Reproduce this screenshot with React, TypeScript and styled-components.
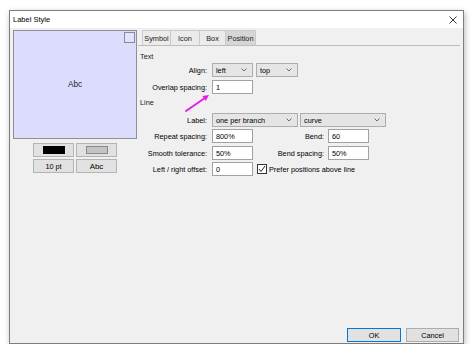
import React from 'react';
import styled, { createGlobalStyle } from 'styled-components';

const GlobalStyle = createGlobalStyle`
  body {
    margin: 0;
    background: #ffffff;
    font-family: "Liberation Sans", Arial, sans-serif;
    font-size: 7.3px;
    color: #000;
  }
`;

const Page = styled.div`
  padding: 10px 0 0 9px;
`;

const Dialog = styled.div`
  width: 455px;
  height: 334px;
  box-sizing: border-box;
  border: 1px solid #7d7d7d;
  background: #f0f0f0;
  box-shadow: 1px 2px 6px rgba(0, 0, 0, 0.28);
  display: flex;
  flex-direction: column;
`;

const TitleBar = styled.div`
  height: 17px;
  background: #ffffff;
  display: flex;
  align-items: center;
  justify-content: space-between;
  padding: 0 6px 0 3px;
  font-size: 7.5px;
`;

const Body = styled.div`
  flex: 1;
  display: flex;
  flex-direction: column;
  padding: 2px 3px 1px 3px;
`;

const Main = styled.div`
  flex: 1;
  display: flex;
  gap: 1px;
`;

const LeftCol = styled.div`
  width: 124px;
  display: flex;
  flex-direction: column;
  align-items: center;
`;

const Preview = styled.div`
  position: relative;
  width: 124px;
  height: 109px;
  box-sizing: border-box;
  background: #dcdcfd;
  border: 1px solid #8f8f96;
  display: flex;
  align-items: center;
  justify-content: center;
  font-size: 8.2px;
  color: #1c1c2c;
`;

const CornerBox = styled.div`
  position: absolute;
  top: 1px;
  right: 1px;
  width: 11px;
  height: 11px;
  box-sizing: border-box;
  border: 1px solid #8a8aa6;
  background: #e2e2fb;
`;

const SwatchGrid = styled.div`
  margin-top: 4px;
  display: grid;
  grid-template-columns: 41px 41px;
  gap: 2px;
`;

const SmallButton = styled.div<{ $big?: boolean }>`
  height: 14px;
  box-sizing: border-box;
  border: 1px solid #b4b4b4;
  background: #e1e1e1;
  display: flex;
  align-items: center;
  justify-content: center;
  font-size: ${p => (p.$big ? '7.9px' : '7.3px')};
`;

const Swatch = styled.div<{ $fill: string; $edge: string }>`
  width: 22px;
  height: 8px;
  box-sizing: border-box;
  background: ${p => p.$fill};
  border: 1px solid ${p => p.$edge};
`;

const RightCol = styled.div`
  flex: 1;
  display: flex;
  flex-direction: column;
`;

const TabStrip = styled.div`
  display: flex;
  height: 15px;
  margin-left: 4px;
`;

const Tab = styled.div<{ $w: number; $active?: boolean }>`
  width: ${p => p.$w}px;
  box-sizing: border-box;
  border: 1px solid #cacaca;
  border-bottom: none;
  margin-left: -1px;
  background: ${p => (p.$active ? '#d6d6d6' : '#ebebeb')};
  display: flex;
  align-items: center;
  justify-content: center;
  color: #202020;
  &:first-child {
    margin-left: 0;
  }
`;

const Pane = styled.div`
  position: relative;
  flex: 1;
  border-top: 1px solid #bdbdbd;
  padding: 6px 0 0 2px;
`;

const Heading = styled.div<{ $gap?: number }>`
  height: 10px;
  line-height: 10px;
  margin-top: ${p => p.$gap ?? 0}px;
  color: #202020;
`;

const Row = styled.div<{ $gap: number }>`
  display: flex;
  align-items: center;
  height: 14px;
  margin-top: ${p => p.$gap}px;
`;

const FieldLabel = styled.div`
  width: 67px;
  margin-right: 5px;
  text-align: right;
  white-space: nowrap;
`;

const SideLabel = styled.div`
  width: 71px;
  margin-right: 4px;
  text-align: right;
  white-space: nowrap;
`;

const Select = styled.div<{ $w: number; $after?: number }>`
  position: relative;
  width: ${p => p.$w}px;
  height: 14px;
  box-sizing: border-box;
  margin-right: ${p => p.$after ?? 0}px;
  border: 1px solid #adadad;
  background: #e5e5e5;
  padding-left: 3px;
  display: flex;
  align-items: center;
  svg {
    position: absolute;
    right: 5px;
    top: 4px;
  }
`;

const Field = styled.div`
  width: 41px;
  height: 14px;
  box-sizing: border-box;
  border: 1px solid #a2a2a2;
  background: #ffffff;
  padding-left: 3px;
  display: flex;
  align-items: center;
`;

const CheckRow = styled.div`
  display: flex;
  align-items: center;
  gap: 2px;
  margin-left: 4px;
  white-space: nowrap;
`;

const CheckBox = styled.div`
  width: 10px;
  height: 10px;
  box-sizing: border-box;
  border: 1px solid #333;
  background: #fff;
  display: flex;
  align-items: center;
  justify-content: center;
`;

const Arrow = styled.svg`
  position: absolute;
  left: 45px;
  top: 46px;
`;

const Footer = styled.div`
  display: flex;
  justify-content: flex-end;
  gap: 5px;
  padding-right: 1px;
`;

const DialogButton = styled.div<{ $primary?: boolean }>`
  width: ${p => (p.$primary ? 54 : 53)}px;
  height: 14px;
  box-sizing: border-box;
  border: 1px solid ${p => (p.$primary ? '#0078d7' : '#adadad')};
  background: #e1e1e1;
  display: flex;
  align-items: center;
  justify-content: center;
`;

const Chevron = () => (
  <svg width="6" height="4" viewBox="0 0 6 4">
    <polyline points="0.5,0.5 3,3 5.5,0.5" fill="none" stroke="#606060" strokeWidth="0.9" />
  </svg>
);

const Dropdown: React.FC<{ w: number; after?: number; value: string }> = ({ w, after, value }) => (
  <Select $w={w} $after={after}>
    {value}
    <Chevron />
  </Select>
);

export default function App() {
  return (
    <Page>
      <GlobalStyle />
      <Dialog>
        <TitleBar>
          <span>Label Style</span>
          <svg width="8" height="8" viewBox="0 0 8 8">
            <path d="M0.5 0.5 L7.5 7.5 M7.5 0.5 L0.5 7.5" stroke="#222" strokeWidth="0.9" />
          </svg>
        </TitleBar>
        <Body>
          <Main>
            <LeftCol>
              <Preview>
                <CornerBox />
                Abc
              </Preview>
              <SwatchGrid>
                <SmallButton>
                  <Swatch $fill="#000" $edge="#000" />
                </SmallButton>
                <SmallButton>
                  <Swatch $fill="#c4c4c4" $edge="#8a8a8a" />
                </SmallButton>
                <SmallButton>10 pt</SmallButton>
                <SmallButton $big>Abc</SmallButton>
              </SwatchGrid>
            </LeftCol>
            <RightCol>
              <TabStrip>
                <Tab $w={29}>Symbol</Tab>
                <Tab $w={30}>Icon</Tab>
                <Tab $w={27}>Box</Tab>
                <Tab $w={31} $active>Position</Tab>
              </TabStrip>
              <Pane>
                <Heading>Text</Heading>
                <Row $gap={1}>
                  <FieldLabel>Align:</FieldLabel>
                  <Dropdown w={41} after={3} value="left" />
                  <Dropdown w={42} value="top" />
                </Row>
                <Row $gap={3}>
                  <FieldLabel>Overlap spacing:</FieldLabel>
                  <Field>1</Field>
                </Row>
                <Heading $gap={4}>Line</Heading>
                <Row $gap={5}>
                  <FieldLabel>Label:</FieldLabel>
                  <Dropdown w={86} after={2} value="one per branch" />
                  <Dropdown w={86} value="curve" />
                </Row>
                <Row $gap={2}>
                  <FieldLabel>Repeat spacing:</FieldLabel>
                  <Field>800%</Field>
                  <SideLabel>Bend:</SideLabel>
                  <Field>60</Field>
                </Row>
                <Row $gap={3}>
                  <FieldLabel>Smooth tolerance:</FieldLabel>
                  <Field>50%</Field>
                  <SideLabel>Bend spacing:</SideLabel>
                  <Field>50%</Field>
                </Row>
                <Row $gap={2}>
                  <FieldLabel>Left / right offset:</FieldLabel>
                  <Field>0</Field>
                  <CheckRow>
                    <CheckBox>
                      <svg width="8" height="8" viewBox="0 0 8 8">
                        <polyline points="1,4 3,6.5 7,1" fill="none" stroke="#111" strokeWidth="0.9" />
                      </svg>
                    </CheckBox>
                    Prefer positions above line
                  </CheckRow>
                </Row>
                <Arrow width="30" height="22" viewBox="0 0 30 22">
                  <line x1="3" y1="19" x2="21.5" y2="6.2" stroke="#e41ee4" strokeWidth="2" strokeLinecap="round" />
                  <polygon points="26,3 22.8,8.9 19.4,4" fill="#e41ee4" />
                </Arrow>
              </Pane>
            </RightCol>
          </Main>
          <Footer>
            <DialogButton $primary>OK</DialogButton>
            <DialogButton>Cancel</DialogButton>
          </Footer>
        </Body>
      </Dialog>
    </Page>
  );
}
